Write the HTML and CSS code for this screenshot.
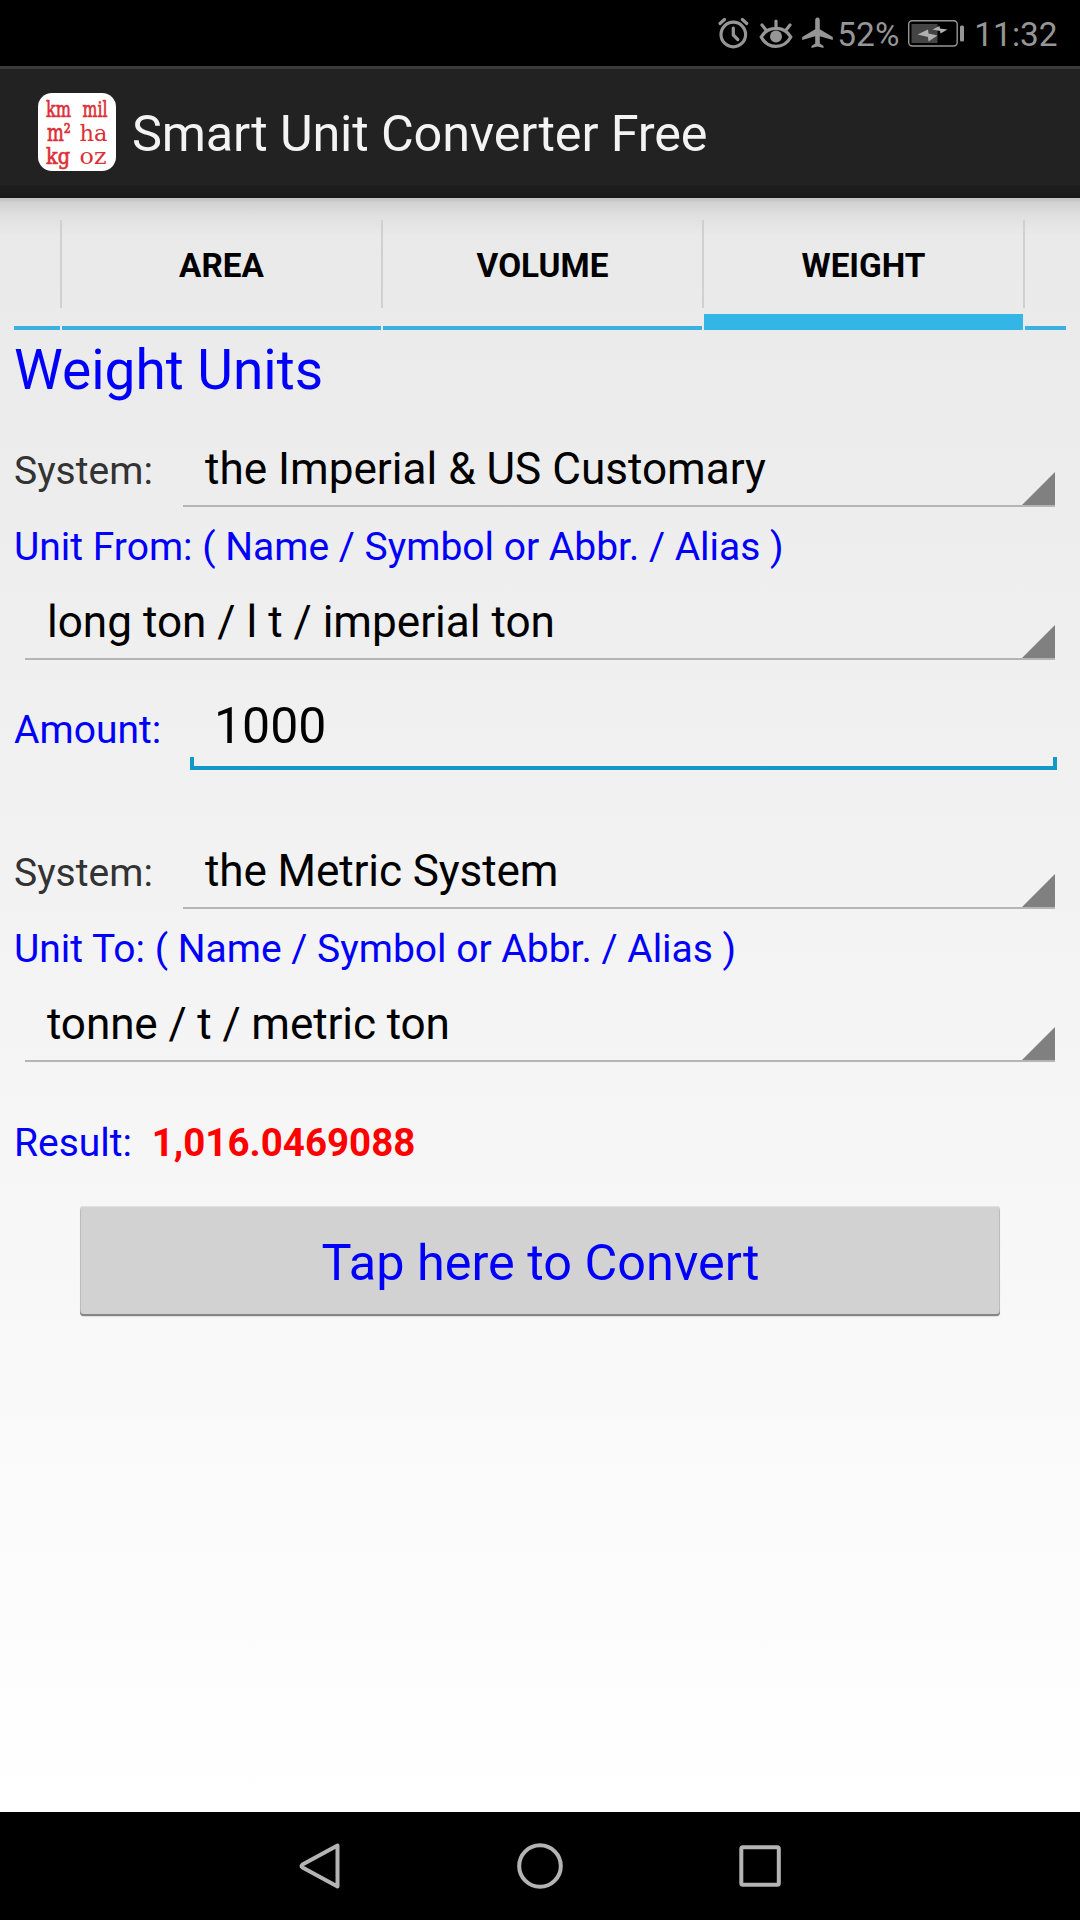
FILE: index.html
```html
<!DOCTYPE html>
<html lang="en">
<head>
    <meta charset="UTF-8" />
    <meta name="viewport" content="width=device-width, initial-scale=1.0" />
    <title>Smart Unit Converter Free</title>
    <link rel="stylesheet" href="styles.css">
</head>
<body>

<!-- Status bar -->
<div class="status-bar">
    <svg class="status-alarm" viewBox="716 0 38 66" width="38" height="66">
        <circle cx="733.3" cy="34.5" r="12.3"></circle>
        <path d="M733.3 28v7l4.5 4.5M720 23.500l4.500-4M746.800 23.500l-4.500-4"></path>
    </svg>
    <svg class="status-eye" viewBox="754 0 44 66" width="44" height="66">
        <path d="M761.200 37C768 25.500 784 25.500 790.800 37C784 49.500 768 49.500 761.200 37z"></path>
        <circle class="solid" cx="776" cy="36.500" r="6"></circle>
        <path d="M776 21v6M762 25l4 5M790 25l-4 5"></path>
    </svg>
    <svg class="status-plane" viewBox="798 0 40 66" width="40" height="66">
        <path class="solid" d="M817.500 17.500c1.500 0 2.300 1.200 2.300 2.700v9l13 7.800v3l-13-3.800v7.300l3.700 2.600v1.900l-6-1.500-6 1.500v-1.900l3.700-2.600v-7.300l-13 3.800v-3l13-7.800v-9c0-1.500.8-2.700 2.300-2.700z"></path>
    </svg>
    <span>52%</span>
    <svg class="status-battery" viewBox="904 0 70 66" width="70" height="66">
        <rect class="battery-case" x="908.700" y="20.700" width="48.500" height="25.300" rx="3.500"></rect>
        <rect class="battery-level" x="911.500" y="24" width="26" height="19"></rect>
        <rect class="solid" x="960" y="25.500" width="4" height="16" rx="1.500"></rect>
        <path class="bolt" d="M917.500 34.500l10.500-5 .5 4 9 2-9 6-.5-4.500zM932.500 29.500l7-3.500 .5 2.500 7.500 1-7 4-.5-2.500z"></path>
    </svg>
    <span>11:32</span>
</div>

<!-- Action bar -->
<header class="action-bar">
    <svg class="app-icon" viewBox="0 0 78 78" width="78" height="78">
        <rect width="78" height="78" rx="14"></rect>
        <text class="heavy" x="8" y="24" font-size="23" textLength="25" lengthAdjust="spacingAndGlyphs">km</text>
        <text class="heavy" x="44.500" y="24" font-size="23" textLength="25" lengthAdjust="spacingAndGlyphs">mil</text>
        <text class="heavy" x="9" y="48" font-size="24" textLength="24" lengthAdjust="spacingAndGlyphs">m²</text>
        <text x="41.500" y="48" font-size="22" textLength="28" lengthAdjust="spacingAndGlyphs">ha</text>
        <text class="heavy" x="8" y="70.500" font-size="22" textLength="24" lengthAdjust="spacingAndGlyphs">kg</text>
        <text x="41.500" y="70.500" font-size="22" textLength="27" lengthAdjust="spacingAndGlyphs">oz</text>
    </svg>
    <h1>Smart Unit Converter Free</h1>
</header>

<main class="content">
    <nav class="tabs">
        <div class="tab tab-first"></div>
        <div class="tab">AREA</div>
        <div class="tab">VOLUME</div>
        <div class="tab active">WEIGHT</div>
        <div class="tab tab-last"></div>
    </nav>

    <section class="form">
        <h2>Weight Units</h2>

        <div class="row">
            <span class="label">System:</span>
            <div class="spinner">the Imperial &amp; US Customary</div>
        </div>
        <p class="caption">Unit From: ( Name / Symbol or Abbr. / Alias )</p>
        <div class="spinner wide">long ton / l t / imperial ton</div>

        <div class="row amount-row">
            <span class="label blue">Amount:</span>
            <div class="amount">1000</div>
        </div>

        <div class="row row-to">
            <span class="label">System:</span>
            <div class="spinner metric">the Metric System</div>
        </div>
        <p class="caption">Unit To: ( Name / Symbol or Abbr. / Alias )</p>
        <div class="spinner wide metric">tonne / t / metric ton</div>

        <p class="result">Result: <strong>1,016.0469088</strong></p>

        <button class="convert">Tap here to Convert</button>
    </section>
</main>

<!-- Navigation bar -->
<div class="nav-bar">
    <svg viewBox="0 0 50 50" width="50" height="50">
        <path d="M7.500 23.500L42.500 4.500V45.500L7.500 26.500Q5.500 25 7.500 23.500z"></path>
    </svg>
    <svg viewBox="0 0 50 50" width="50" height="50">
        <circle cx="25" cy="25" r="20.800"></circle>
    </svg>
    <svg viewBox="0 0 50 50" width="50" height="50">
        <rect x="6.300" y="6.300" width="37.500" height="37.500" rx="1.500"></rect>
    </svg>
</div>

</body>
</html>
```
FILE: styles.css
```css
* {
    box-sizing: border-box;
}

body {
    margin: 0;
    width: 1080px;
    height: 1920px;
    display: flex;
    flex-direction: column;
    overflow: hidden;
    background-color: #000;
    font-family: Roboto, sans-serif;
}

h1, h2, p {
    margin: 0;
    font-weight: 400;
}

/* Status bar */
.status-bar {
    height: 66px;
    padding-right: 22.5px;
    display: flex;
    justify-content: flex-end;
    font-size: 33.4px;
    line-height: 69px;
    color: #969696;
}

.status-bar svg {
    fill: none;
    stroke: #969696;
    stroke-width: 3.2;
    stroke-linecap: round;
}

.status-bar .solid {
    fill: #969696;
    stroke: none;
}

.status-bar .bolt {
    fill: #b0b0b0;
    stroke: none;
}

.status-bar .battery-case {
    stroke-width: 1.4;
}

.status-bar .battery-level {
    fill: #444;
    stroke: none;
}

.status-plane {
    margin-right: -1px;
}

.status-battery {
    margin-left: 5px;
}

/* Action bar */
.action-bar {
    height: 132px;
    padding: 0 38px;
    display: flex;
    align-items: center;
    gap: 16px;
    border-top: 3px solid #3b3b3b;
    background: linear-gradient(#222 0, #222 116px, #1d1d1d 117px, #1a1a1a 100%);
}

.action-bar h1 {
    font-size: 50.4px;
    line-height: 60px;
    letter-spacing: -0.15px;
    padding-top: 1px;
    color: #f3f3f3;
}

.app-icon {
    flex: none;
    margin-bottom: 3px;
}

.app-icon rect {
    fill: #fff;
}

.app-icon text {
    font-family: "DejaVu Serif", serif;
    fill: #dc2f36;
}

.app-icon .heavy {
    stroke: #dc2f36;
    stroke-width: 0.7;
}

/* Content */
.content {
    flex: 1;
    background:
        linear-gradient(rgba(0, 0, 0, 0.15) 3px, rgba(0, 0, 0, 0.1) 4px, rgba(0, 0, 0, 0.04) 18px, rgba(0, 0, 0, 0) 38px),
        linear-gradient(#e9e9e9, #fff);
}

.tabs {
    height: 132px;
    margin: 0 14px;
    display: flex;
    gap: 2px;
}

.tab {
    position: relative;
    flex: 1;
    padding-top: 2px;
    border-bottom: 4px solid #3cb1df;
    text-align: center;
    font-size: 33.3px;
    font-weight: 700;
    line-height: 131px;
    color: #000;
}

.tab-first {
    flex: 0 0 46px;
}

.tab-last {
    flex: 0 0 41px;
}

.tab.active {
    border-bottom: 16px solid #33b5e5;
}

/* Thin divider standing in the gap between tabs */
.tab + .tab::before {
    content: "";
    position: absolute;
    left: -2px;
    top: 22px;
    width: 2px;
    height: 88px;
    background-color: #d0d0d0;
}

.form {
    padding: 0 25px 0 14px;
    font-size: 39px;
    color: #0000fa;
}

.form h2 {
    margin-bottom: 22px;
    font-size: 55px;
    line-height: 80px;
}

.row {
    display: flex;
    align-items: baseline;
}

.label {
    width: 169px;
    color: #333;
}

.label.blue {
    width: 176px;
    color: #0000fa;
}

.spinner {
    position: relative;
    flex: 1;
    height: 75px;
    padding-left: 22px;
    border-bottom: 2px solid #b5b5b5;
    font-size: 44.1px;
    line-height: 75px;
    color: #000;
}

.spinner.wide {
    margin-left: 11px;
    padding-left: 22px;
}

.spinner.metric {
    letter-spacing: -0.12px;
}

.spinner::after {
    content: "";
    position: absolute;
    right: 0;
    bottom: 0;
    width: 33px;
    height: 33px;
    background-color: #808080;
    clip-path: polygon(100% 0, 100% 100%, 0 100%);
}

.caption {
    padding-top: 2px;
    height: 78px;
    line-height: 77px;
}

.amount-row {
    margin-top: 26px;
}

.amount {
    position: relative;
    flex: 1;
    height: 84px;
    margin-right: -2px;
    padding-left: 24px;
    border-bottom: 4px solid #1299c8;
    font-size: 50px;
    line-height: 80px;
    color: #000;
}

.amount::after {
    content: "";
    position: absolute;
    left: 0;
    right: 0;
    bottom: 0;
    height: 9px;
    border: solid #1299c8;
    border-width: 0 4px;
}

.row-to {
    margin-top: 64px;
}

.result {
    margin-top: 51px;
    line-height: 60px;
}

.result strong {
    margin-left: 10px;
    font-size: 38.5px;
    color: #f00;
}

.convert {
    display: block;
    width: 920px;
    height: 110px;
    margin: 33px 0 0 66px;
    padding: 3px 0 0 1px;
    border: 0;
    border-radius: 4px;
    background-color: #d2d2d2;
    box-shadow: inset 0 -2px 0 #858585, inset 0 1px 0 #e0e0e0, inset 1px 0 0 #bbb, inset -1px 0 0 #bbb, 0 1px 1px #ddd;
    font-family: inherit;
    font-size: 50.4px;
    color: #0000fa;
}

/* Navigation bar */
.nav-bar {
    height: 108px;
    display: flex;
    justify-content: center;
    align-items: center;
    gap: 170px;
}

.nav-bar svg {
    fill: none;
    stroke: #b4b4b4;
    stroke-width: 4;
    stroke-linejoin: round;
}
```
